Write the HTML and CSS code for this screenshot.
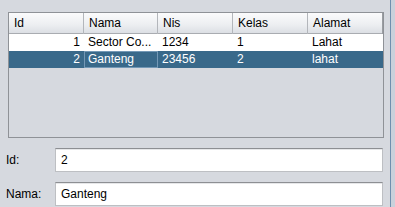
FILE: index.html
```html
<!DOCTYPE html>
<html>
<head>
<meta charset="utf-8">
<link rel="stylesheet" href="styles.css">
</head>
<body>
<div class="frame">
  <div class="panel">
    <div class="scroll">
      <div class="grid head">
        <div class="hc">Id</div>
        <div class="hc">Nama</div>
        <div class="hc">Nis</div>
        <div class="hc">Kelas</div>
        <div class="hc last">Alamat</div>
      </div>
      <div class="grid row">
        <div class="c num">1</div>
        <div class="c">Sector Co...</div>
        <div class="c">1234</div>
        <div class="c">1</div>
        <div class="c">Lahat</div>
      </div>
      <div class="grid row sel">
        <div class="c num">2</div>
        <div class="c focus">Ganteng</div>
        <div class="c">23456</div>
        <div class="c">2</div>
        <div class="c">lahat</div>
      </div>
    </div>
    <div class="field">
      <label class="lbl">Id:</label>
      <div class="input">2</div>
    </div>
    <div class="field">
      <label class="lbl">Nama:</label>
      <div class="input">Ganteng</div>
    </div>
  </div>
  <div class="edge"></div>
</div>
</body>
</html>
```

FILE: styles.css
```css
html, body {
  margin: 0;
  padding: 0;
  background: #d6d9df;
  font-family: "Liberation Sans", Arial, sans-serif;
  font-size: 12px;
  color: #000;
}
.frame {
  display: flex;
  width: 395px;
  height: 207px;
  overflow: hidden;
}
.panel {
  width: 391px;
  padding: 12px 0 0 8px;
  box-sizing: border-box;
  display: flex;
  flex-direction: column;
}
.edge {
  width: 4px;
  border-left: 1px solid #6f8fae;
  background: #c9d1db;
}
.scroll {
  width: 376px;
  height: 126px;
  box-sizing: border-box;
  border: 1px solid #8f9297;
  background: #d6d9df;
}
.grid {
  display: grid;
  grid-template-columns: 75px 74px 75px 75px 75px;
}
.head {
  height: 21px;
  background: linear-gradient(#fbfbfc, #eceef1 60%, #dcdfe4);
  border-bottom: 1px solid #a9acb1;
  box-sizing: border-box;
}
.hc {
  line-height: 21px;
  padding-left: 5px;
  border-right: 1px solid #b3b6bb;
  box-sizing: border-box;
}
.hc.last {
  border-right: 1px solid #9a9da2;
}
.row {
  height: 17px;
  background: #fff;
}
.c {
  line-height: 17px;
  padding-left: 4px;
  white-space: nowrap;
  overflow: hidden;
  box-sizing: border-box;
}
.num {
  text-align: right;
  padding-right: 4px;
}
.sel {
  background: #39698a;
  color: #fff;
}
.focus {
  border: 1px solid #7398b6;
  line-height: 15px;
  padding-left: 3px;
}
.field {
  display: flex;
  align-items: center;
  margin-top: 10px;
  margin-left: -2px;
}
.field + .field {
  margin-top: 10px;
}
.lbl {
  width: 49px;
}
.input {
  width: 328px;
  height: 24px;
  box-sizing: border-box;
  background: #fff;
  border: 1px solid #bdbfc3;
  border-top-color: #8d8f93;
  box-shadow: inset 0 1px 0 #e6e7e9;
  padding-left: 5px;
  line-height: 22px;
}
```
